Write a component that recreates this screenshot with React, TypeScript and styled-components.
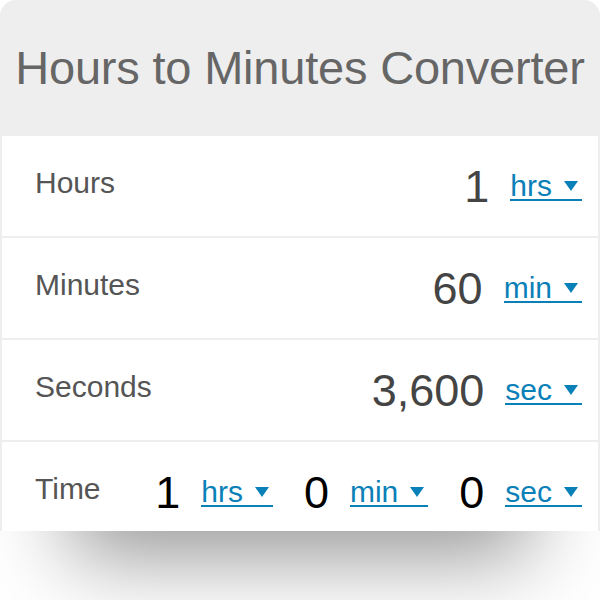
import styled, { createGlobalStyle } from 'styled-components'

const GlobalStyle = createGlobalStyle`
  html, body {
    margin: 0;
    padding: 0;
    background: #fff;
  }
  body {
    font-family: "Liberation Sans", Arial, sans-serif;
  }
`

const Page = styled.div`
  width: 600px;
  height: 600px;
  overflow: hidden;
`

// the widget is cut off partway through its last row
const Card = styled.div`
  height: 531px;
  overflow: hidden;
  background: #eeeeee;
  border-radius: 16px 16px 0 0;
  padding: 0 2px;
  display: flex;
  flex-direction: column;
  gap: 2px;
  box-shadow: 0 95px 80px -70px rgba(0, 0, 0, 0.42);
`

const Title = styled.h1`
  margin: 0;
  height: 134px;
  flex-shrink: 0;
  display: flex;
  align-items: center;
  justify-content: center;
  font-size: 47px;
  font-weight: normal;
  letter-spacing: -0.2px;
  color: #666;
`

const Row = styled.div`
  background: #fff;
  height: 100px;
  flex-shrink: 0;
  padding: 0 16px 0 33px;
  display: flex;
  align-items: center;
  gap: 31px;
`

const Label = styled.div`
  flex: 1;
  font-size: 30px;
  color: #555;
  padding-bottom: 6px;
`

const Value = styled.div`
  display: flex;
  align-items: center;
  gap: 21px;
`

const Amount = styled.span<{ $dark?: boolean }>`
  font-size: 45px;
  color: ${({ $dark }) => ($dark ? '#000' : '#444')};
  line-height: 1;
`

const Unit = styled.span`
  display: inline-block;
  font-size: 30px;
  line-height: 27px;
  color: #0a80b8;
  border-bottom: 2px solid #0a80b8;
  white-space: nowrap;
  cursor: pointer;
`

const Caret = styled.span`
  display: inline-block;
  width: 0;
  height: 0;
  margin: 0 4px 0 12px;
  border-left: 7px solid transparent;
  border-right: 7px solid transparent;
  border-top: 10px solid currentColor;
  vertical-align: 5px;
`

const Field = ({ amount, unit, dark }: { amount: string; unit: string; dark?: boolean }) =>
  <Value>
    <Amount $dark={dark}>{amount}</Amount>
    <Unit>{unit}<Caret /></Unit>
  </Value>

export default function App() {
  return (
    <Page>
      <GlobalStyle />
      <Card>
        <Title>Hours to Minutes Converter</Title>
        <Row>
          <Label>Hours</Label>
          <Field amount="1" unit="hrs" />
        </Row>
        <Row>
          <Label>Minutes</Label>
          <Field amount="60" unit="min" />
        </Row>
        <Row>
          <Label>Seconds</Label>
          <Field amount="3,600" unit="sec" />
        </Row>
        <Row>
          <Label>Time</Label>
          <Field amount="1" unit="hrs" dark />
          <Field amount="0" unit="min" dark />
          <Field amount="0" unit="sec" dark />
        </Row>
      </Card>
    </Page>
  )
}
